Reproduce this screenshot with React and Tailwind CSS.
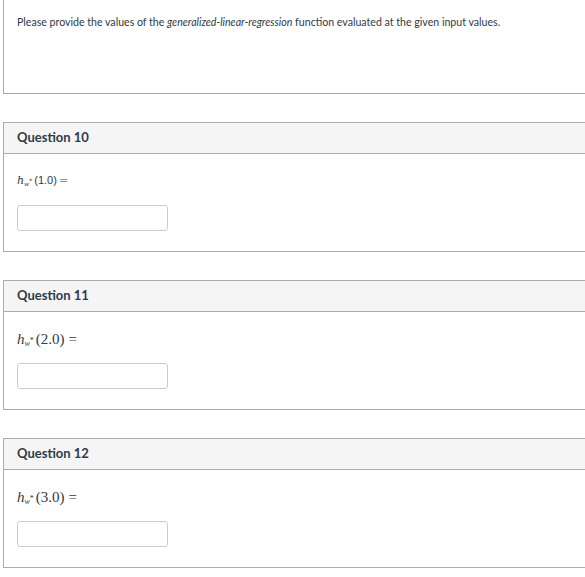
const questions = [
  { number: 10, input: "1.0", small: true },
  { number: 11, input: "2.0" },
  { number: 12, input: "3.0" },
]

const MathLabel = ({ input, small }) => {
  if (small) {
    return (
      <span className="flex items-baseline text-[11px] text-[#2d3b45]" style={{ fontFamily: '"DejaVu Serif", serif' }}>
        <span className="italic">h</span>
        <span className="italic text-[6px] relative top-[2px]">w</span>
        <span className="text-[6px] relative top-[-1px] mr-[2px]">*</span>
        <span className="font-[Liberation_Sans,sans-serif]">({input})</span>
        <span className="ml-[2px] text-[#8a8f94]">=</span>
      </span>
    )
  }
  return (
    <span className="flex items-baseline text-[15px] text-[#2d3b45]" style={{ fontFamily: '"Liberation Serif", serif' }}>
      <span className="italic">h</span>
      <span className="italic text-[8px] relative top-[2px]">w</span>
      <span className="text-[8px] relative top-[-1px] mr-[2px]">*</span>
      <span>({input})</span>
      <span className="ml-[4px]">=</span>
    </span>
  )
}

const QuestionCard = ({ q }) => (
  <div className="border border-r-0 border-[#acacac]">
    <div className="h-[31px] bg-[#f5f5f5] border-b border-[#acacac] flex items-center pl-[13px]">
      <h3 className="text-[13px] font-bold text-[#2d3b45]">Question {q.number}</h3>
    </div>
    <div className="pl-[13px] pt-[19px] pb-[20px]">
      <div className="h-[16px] flex items-center">
        <MathLabel input={q.input} small={q.small} />
      </div>
      <input
        type="text"
        className="mt-[16px] block w-[151px] h-[26px] border border-[#c7cdd1] rounded-[3px] bg-white outline-none"
      />
    </div>
  </div>
)

export default function App() {
  return (
    <div className="min-h-[577px] bg-white pl-[3px]" style={{ fontFamily: 'Lato, "Liberation Sans", sans-serif' }}>
      <div className="flex flex-col gap-[28px]">
        {/* Intro */}
        <div className="h-[94px] border-l border-b border-[#acacac] pl-[13px] pt-[15px]">
          <p className="text-[10.6px] leading-[14px] text-[#2d3b45]">
            Please provide the values of the <em>generalized-linear-regression</em> function evaluated at the given input values.
          </p>
        </div>

        {questions.map((q) => (
          <QuestionCard key={q.number} q={q} />
        ))}
      </div>
    </div>
  )
}
